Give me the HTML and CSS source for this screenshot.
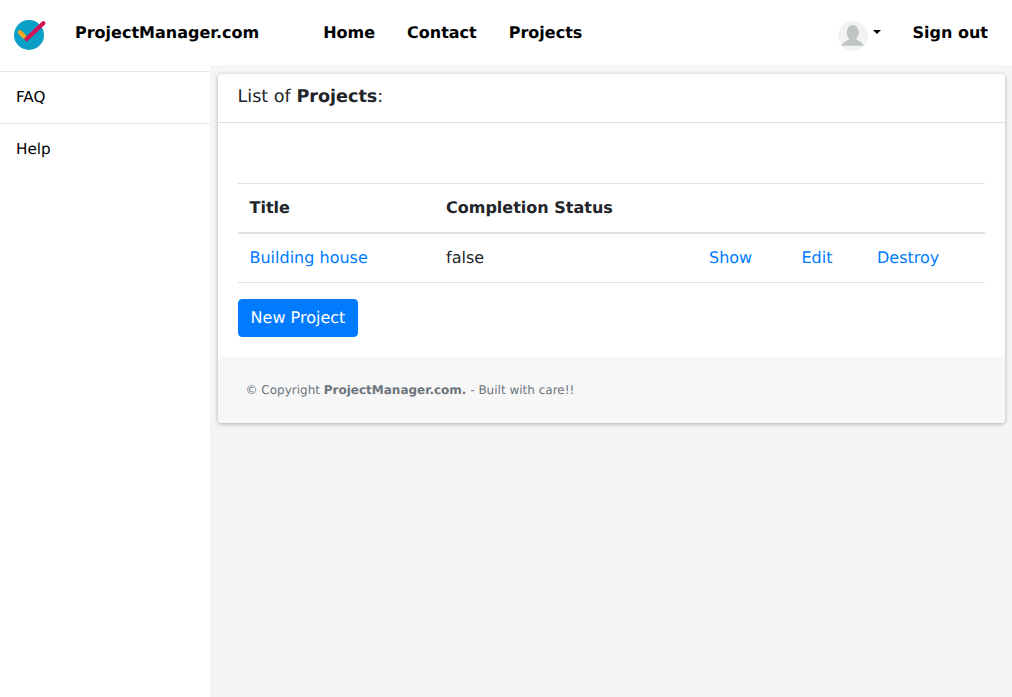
FILE: index.html
```html
<!DOCTYPE html>
<html lang="en">
<head>
    <meta charset="UTF-8">
    <meta name="viewport" content="width=device-width, initial-scale=1.0">
    <title>ProjectManager.com</title>
    <link rel="stylesheet" href="styles.css">
</head>
<body>
    <nav class="navbar">
        <a class="brand" href="#">
            <svg class="logo" viewBox="0 0 32 32" width="32" height="32">
                <circle cx="15" cy="16" r="15" fill="#0a9fc6"/>
                <path d="M6 13.3 L10.3 17.6" stroke="#f5a81c" stroke-width="4.4" stroke-linecap="round" fill="none"/>
                <path d="M12.7 20 L29.3 4.3" stroke="#d01257" stroke-width="4.2" stroke-linecap="round" fill="none"/>
            </svg>
            <span class="brand-name">ProjectManager.com</span>
        </a>
        <div class="nav-links">
            <a href="#">Home</a>
            <a href="#">Contact</a>
            <a href="#">Projects</a>
        </div>
        <div class="nav-right">
            <a class="user-menu" href="#">
                <svg class="avatar" viewBox="0 0 30 30" width="30" height="30">
                    <circle cx="15" cy="15" r="15" fill="#f1f3f3"/>
                    <ellipse cx="14.7" cy="11.5" rx="6" ry="7.5" fill="#bfc3c4"/>
                    <path d="M3.7 24.8 C4.5 21 8.5 20.5 11.5 18 L18 18 C21 20.5 24.5 21 25.5 24.8 Z" fill="#bfc3c4"/>
                </svg>
                <span class="caret"></span>
            </a>
            <a class="sign-out" href="#">Sign out</a>
        </div>
    </nav>

    <div class="wrapper">
        <aside class="sidebar">
            <a href="#">FAQ</a>
            <a href="#">Help</a>
        </aside>

        <main class="content">
            <section class="card">
                <header class="card-header">List of <strong>Projects</strong>:</header>
                <div class="card-body">
                    <table class="table">
                        <thead>
                            <tr>
                                <th class="col-title">Title</th>
                                <th class="col-status">Completion Status</th>
                                <th class="col-show"></th>
                                <th class="col-edit"></th>
                                <th></th>
                            </tr>
                        </thead>
                        <tbody>
                            <tr>
                                <td><a href="#">Building house</a></td>
                                <td>false</td>
                                <td><a href="#">Show</a></td>
                                <td><a href="#">Edit</a></td>
                                <td><a href="#">Destroy</a></td>
                            </tr>
                        </tbody>
                    </table>
                    <a class="btn" href="#">New Project</a>
                </div>
                <footer class="card-footer">© Copyright <strong>ProjectManager.com.</strong> - Built with care!!</footer>
            </section>
        </main>
    </div>
</body>
</html>
```

FILE: styles.css
```css
* {
    box-sizing: border-box;
}
html, body {
    height: 100%;
}
body {
    margin: 0;
    font-family: "DejaVu Sans", sans-serif;
    font-size: 16px;
    line-height: 24px;
    color: #212529;
    background: #f4f5f5;
    display: flex;
    flex-direction: column;
    text-rendering: geometricPrecision;
}
a {
    color: #007bff;
    text-decoration: none;
}

.navbar {
    height: 65px;
    flex: none;
    background: #fff;
    display: flex;
    align-items: center;
}
.navbar a {
    color: #000;
    font-weight: bold;
}
.brand {
    display: flex;
    align-items: center;
    padding-left: 14px;
}
.logo {
    display: block;
    margin-top: 5px;
}
.brand-name {
    margin-left: 29px;
}
.nav-links {
    display: flex;
    gap: 32px;
    margin-left: 64px;
}
.nav-right {
    display: flex;
    align-items: center;
    margin-left: auto;
    padding-right: 24px;
}
.user-menu {
    display: flex;
    align-items: center;
    margin-top: 6px;
}
.avatar {
    display: block;
}
.caret {
    width: 0;
    height: 0;
    margin: -8px 0 0 5px;
    border-top: 4px solid #000;
    border-left: 4px solid transparent;
    border-right: 4px solid transparent;
}
.sign-out {
    margin-left: 32px;
}

.wrapper {
    flex: 1;
    display: flex;
}
.sidebar {
    width: 210px;
    flex: none;
    padding-top: 6px;
    background: #fff;
}
.sidebar a {
    display: block;
    height: 52px;
    padding: 13px 16px;
    font-size: 15.2px;
    color: #000;
    border-top: 1px solid #e9e9e9;
}
.content {
    flex: 1;
    padding: 9px 7px 0 8px;
}

.card {
    background: #fff;
    border-radius: 4px;
    box-shadow: 0 1px 4px rgba(0, 0, 0, .3);
    overflow: hidden;
}
.card-header {
    height: 49px;
    padding: 11px 19.5px;
    font-size: 17.6px;
    border-bottom: 1px solid #dfdfdf;
}
.card-body {
    padding: 60px 20px 20px;
}
.table {
    width: 100%;
    border-collapse: collapse;
    margin-bottom: 16px;
}
.table th, .table td {
    padding: 12px 12px 12px 11.5px;
    text-align: left;
    border-top: 1px solid #dee2e6;
}
.table th {
    height: 49px;
    border-bottom: 2px solid #dee2e6;
}
.table td {
    height: 49px;
    border-bottom: 1px solid #dee2e6;
}
.col-title {
    width: 196.5px;
}
.col-status {
    width: 263px;
}
.col-show {
    width: 92.5px;
}
.col-edit {
    width: 75.5px;
}
.btn {
    display: inline-block;
    height: 38px;
    padding: 6px 11.6px;
    color: #fff;
    background: #007bff;
    border: 1px solid #007bff;
    border-radius: 4px;
    vertical-align: top;
}
.card-footer {
    height: 66px;
    padding: 21px 27.5px;
    font-size: 12px;
    color: #6c757d;
    background: #f7f7f7;
}
```
